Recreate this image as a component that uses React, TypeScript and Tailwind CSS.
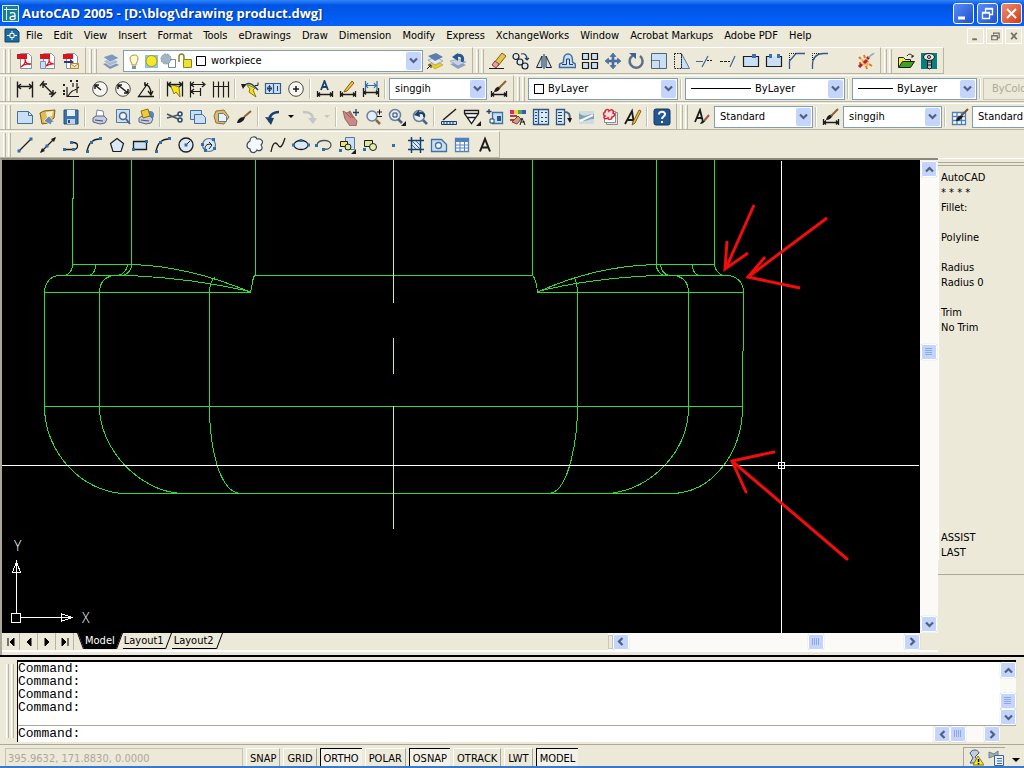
import { ReactNode } from "react";
import clsx from "clsx";

const ink = "#1c1c1c";
const navy = "#1d3f6b";
const sky = "#c9dff5";

const icons: Record<string, ReactNode> = {
  // Acrobat
  pdf: (
    <>
      <path d="M4.500 1.500h8l3 3v12h-11z" fill="#fff" stroke="#8a8fa8" />
      <path d="M1 2h10v5H1z" fill="#d8141c" />
      <path d="M5 15c3-2 5-5 4-8 0 4 3 6 6 5-4-.5-8 1-10 3z" fill="none" stroke="#d8141c" strokeWidth="1.300" />
    </>
  ),
  pdfMail: (
    <>
      <path d="M4.500 1.500h8l3 3v12h-11z" fill="#fff" stroke="#8a8fa8" />
      <path d="M1 2h10v5H1z" fill="#d8141c" />
      <path d="M7 14c2-2 4-4 3-7 0 4 2 5 5 5-3-.5-6 1-8 2z" fill="none" stroke="#d8141c" strokeWidth="1.200" />
      <path d="M1.500 9.500h5v7h-5z" fill={sky} stroke="#7d93b8" />
    </>
  ),
  pdfReview: (
    <>
      <path d="M4.500 1.500h8l3 3v12h-11z" fill="#fff" stroke="#8a8fa8" />
      <path d="M1 2h10v5H1z" fill="#d8141c" />
      <path d="M2 9h6V7l4 3-4 3v-2H2z" fill="#26398c" />
      <path d="M8.500 11.500h8v5h-8zl4 3 4-3" fill="#f4dfa0" stroke="#b08b3c" />
    </>
  ),
  // Layers
  layers: (
    <>
      <path d="M1 12l9-3 7 4-9 4z" fill="#7d93b8" />
      <path d="M1 9l9-3 7 4-9 4z" fill="#a9bad6" stroke="#fff" strokeWidth=".5" />
      <path d="M1 5l9-3 7 4-9 4z" fill="#7f97bd" stroke="#fff" strokeWidth=".5" />
    </>
  ),
  layersCurrent: (
    <>
      <path d="M3 12l8-3 6 4-8 4z" fill="#e8cf1f" stroke="#9c8a16" strokeWidth=".5" />
      <path d="M2 8l8-3 7 4-8 4z" fill="#dfe8f4" stroke="#6d84a8" strokeWidth=".6" />
      <path d="M2 4l8-3 7 4-8 4z" fill="#5b7eae" />
      <path d="M1 17l4-4M5 16v-3H2" fill="none" stroke={ink} />
    </>
  ),
  layersPrev: (
    <>
      <path d="M1 12l9-2 7 3-8 4z" fill="#8b9fbf" />
      <path d="M1 9l9-2 7 3-8 4z" fill="#c6d3e6" stroke="#7086a8" strokeWidth=".5" />
      <path d="M13 10c2-5-1-8-6-6" fill="none" stroke="#2b5890" strokeWidth="3" />
      <path d="M9 1L3 5l6 4z" fill="#2b5890" />
    </>
  ),
  // Modify
  erase: (
    <>
      <path d="M5 11l8-10 4 3-8 10z" fill="#e4c64a" stroke="#77601a" />
      <path d="M3 13l3-4 4 3-3 4z" fill="#e6a0a0" stroke="#8a4444" />
      <path d="M0 16.500h15" stroke={ink} />
    </>
  ),
  copy: (
    <g fill="#dce8f5" stroke={ink} strokeWidth="1.200">
      <circle cx="4" cy="4.500" r="3" /><circle cx="8" cy="10" r="3" /><circle cx="13" cy="14" r="3" />
      <path d="M9 2c4-1 6 1 6 6m-2-2l2 2 2-2" fill="none" stroke={navy} />
    </g>
  ),
  mirror: (
    <>
      <path d="M1.500 15.500L7 4v11.500zM16.500 15.500L11 4v11.500z" fill={sky} stroke={ink} />
      <path d="M9 2v15" stroke="#3970b0" strokeWidth="1.500" />
    </>
  ),
  offset: (
    <>
      <path d="M1.500 15.500v-3c0-1.500 4-1 4-3V8c0-8 9-8 9 0v1.500c0 2 3 1.500 3 3v3z" fill={sky} stroke="#416c9c" strokeWidth="1.500" />
      <path d="M4 12.500h4.500V7h3v5.500H15" fill="none" stroke={navy} />
    </>
  ),
  array: <path d="M1.500 1.500h6v6h-6zM10.500 1.500h6v6h-6zM1.500 10.500h6v6h-6zM10.500 10.500h6v6h-6z" fill={sky} stroke={ink} strokeWidth="1.200" />,
  move: <path d="M9 1l3 3.500h-2V8h3.500V6L17 9l-3.500 3v-2H10v3.500h2L9 17l-3-3.500h2V10H4.500v2L1 9l3.500-3v2H8V4.500H6z" fill="#4a76ad" stroke="#2f4f7c" strokeWidth=".5" />,
  rotate: (
    <>
      <path d="M6 3.500A6.500 6.500 0 1 0 13 4" fill="none" stroke="#5c6f8c" strokeWidth="2.500" />
      <path d="M2 1h7v6z" fill="#3c6296" />
    </>
  ),
  scale: (
    <>
      <path d="M1.500 1.500h15v15h-15z" fill={sky} stroke="#52647c" />
      <path d="M1.500 8.500h8v8" fill="none" stroke={ink} strokeDasharray="1 1" />
    </>
  ),
  stretch: (
    <>
      <path d="M8.500 1.500v15h8z" fill={sky} stroke="#5b7595" />
      <path d="M1.500 1.500h7v15h-7z" fill="none" stroke={ink} strokeDasharray="1.500 1" />
    </>
  ),
  trim: (
    <>
      <path d="M0 9.500h7M6 15l6-11" stroke="#3f6698" strokeWidth="1.200" />
      <path d="M11 8.500h6" stroke={ink} strokeDasharray="2 1" />
    </>
  ),
  extend: (
    <>
      <path d="M1 9.500h10" stroke={ink} strokeDasharray="3 1" />
      <path d="M11 15l5-11" stroke="#3f6698" strokeWidth="1.200" />
    </>
  ),
  breakPoint: (
    <>
      <path d="M1.500 4.500h15v10h-15z" fill={sky} stroke={ink} strokeWidth="1.200" />
      <path d="M10 2h4v4h-4z" fill="#3f6fae" />
    </>
  ),
  breakAt: (
    <>
      <path d="M5 4.500H1.500v10h15v-10H14" fill={sky} stroke={ink} strokeWidth="1.200" />
      <path d="M4 2h3v4H4zM12 2h3v4h-3z" fill="#3f6fae" />
    </>
  ),
  chamfer: (
    <>
      <path d="M1.500 17V9L8 1.500h9" fill="none" stroke="#35598b" strokeWidth="1.300" />
      <path d="M1.500 8V1.500H8" fill="none" stroke={ink} strokeDasharray="1 1" />
    </>
  ),
  fillet: (
    <>
      <path d="M1.500 17v-4q0-11 11-11.500H17" fill="none" stroke="#35598b" strokeWidth="1.300" />
      <path d="M1.500 8V1.500H8" fill="none" stroke={ink} strokeDasharray="1 1" />
    </>
  ),
  explode: (
    <>
      <path d="M2 5l2 2M7 3l1 3M2 11h2M12 12l3 2M9 14l1 3" stroke="#e87818" strokeWidth="2" />
      <path d="M4 7l4 1 4 1-1 5-5-1z" fill="#f2b060" />
      <path d="M2 15l3-3M7 11l3-3M10 7l2-2" stroke="#b5202e" strokeWidth="3" />
      <path d="M12 6c1-4 4-3 5-5" fill="none" stroke="#9da4b8" strokeWidth="1.500" />
    </>
  ),
  openModel: (
    <>
      <path d="M1.500 15V5.500h5l2 2h5v3" fill="#f3ee38" stroke={ink} />
      <path d="M1.500 15.500l4-6h12l-4 6z" fill="#3ea025" stroke={ink} />
      <path d="M10 4c2-3 5-2 6 1m-2 0h2V3" fill="none" stroke={ink} />
    </>
  ),
  bolt: (
    <>
      <path d="M1 1h16v16H1z" fill="#087e82" />
      <path d="M7.500 7h4v9l-2 1-2-1z" fill="#bcbcbc" stroke={ink} />
      <ellipse cx="9" cy="5" rx="5.500" ry="3.500" fill="#e6e6e6" stroke={ink} />
      <circle cx="9" cy="5" r="1.500" fill="none" stroke={ink} />
      <path d="M8 10h3M8 13h3" stroke={ink} />
    </>
  ),
  // Dimension
  dimLinear: <path d="M1.500 1.500v16M16.500 1.500v16M2 6.500h14M5 4L2 6.500 5 9M13 4l3 2.500L13 9" fill="none" stroke={ink} strokeWidth="1.400" />,
  dimAligned: <path d="M1 6l4-5M12 17l5-5M4 4l10 10M4 8V4h4M14 10v4h-4" fill="none" stroke={ink} strokeWidth="1.400" />,
  dimOrdinate: (
    <>
      <path d="M5 7v9.500h12M6 16c2-3 4-6 7-6l4-3M11 3v4M15 3v10" fill="none" stroke={ink} strokeWidth="1.200" />
      <path d="M1 5h2M1 11h2M1 14h2M8 1h2M14 1h2" stroke={ink} strokeWidth="2" />
    </>
  ),
  dimRadius: (
    <>
      <circle cx="9" cy="9" r="7.300" fill="#f6f5ef" stroke="#4b4b4b" />
      <path d="M4 5l6 5M4 9V5h4" fill="none" stroke={ink} strokeWidth="1.500" />
    </>
  ),
  dimDiameter: (
    <>
      <circle cx="9" cy="9" r="7.300" fill="#f6f5ef" stroke="#4b4b4b" />
      <path d="M4 5l10 8M4 9V5h4M14 9v4h-4" fill="none" stroke={ink} strokeWidth="1.500" />
    </>
  ),
  dimAngular: <path d="M17 16.500H1.500L11 3M7 4c4 0 7 4 7 10M8 2v4M11 11l3 4 2-4" fill="none" stroke={ink} strokeWidth="1.300" />,
  dimQuick: (
    <>
      <path d="M4 4l9 3 1 10-4-5-2 2z" fill="#f2e220" stroke="#867b12" />
      <path d="M1.500 1.500v15M16.500 1.500v15M2 4.500h14M5 2L2 4.500 5 7M13 2l3 2.500L13 7" fill="none" stroke={ink} strokeWidth="1.300" />
    </>
  ),
  dimBaseline: <path d="M1.500 1.500v16M2 4.500h14M2 11.500h9M11.500 8v8M5 2L2 4.500 5 7M13 2l3 2.500L13 7M5 9l-3 2.500L5 14" fill="none" stroke={ink} strokeWidth="1.200" />,
  dimContinue: <path d="M1.500 1.500v16M6.500 1.500v16M11.500 1.500v16M16.500 1.500v16M2 6.500h14" fill="none" stroke={ink} strokeWidth="1.200" />,
  leader: (
    <>
      <path d="M2 7c4-5 8-4 11-1l4 4" fill="none" stroke={navy} strokeWidth="1.500" />
      <path d="M5 4l9 4-2 2 3 7-7-5 1-3z" fill="#f2e220" stroke="#867b12" />
      <path d="M0 4l5 0-3 5z" fill={ink} />
      <path d="M14 5.500h3v-3" fill="none" stroke={ink} />
    </>
  ),
  tolerance: (
    <>
      <path d="M1.500 3.500h15v10h-15zM9.500 3.500v10" fill={sky} stroke="#35598b" strokeWidth="1.200" />
      <circle cx="5.500" cy="8.500" r="2" fill="none" stroke={navy} />
      <path d="M5.500 5v7M3 8.500h5M13.500 6v5" stroke={navy} />
    </>
  ),
  centerMark: (
    <>
      <circle cx="9" cy="9" r="7.300" fill="#f6f5ef" stroke="#4b4b4b" />
      <path d="M9 6v6M6 9h6" stroke={ink} strokeWidth="1.500" />
    </>
  ),
  dimEdit: (
    <>
      <path d="M1.500 11v6M16.500 11v6M2 14.500h14M4 12.500l-2 2 2 2M14 12.500l2 2-2 2" fill="none" stroke={ink} strokeWidth="1.300" />
      <path d="M5 10l3.500-9L12 10M6 7h5" fill="none" stroke={navy} strokeWidth="1.800" />
    </>
  ),
  dimTextEdit: (
    <>
      <path d="M1.500 11v6M16.500 11v6M2 14.500h14M4 12.500l-2 2 2 2M14 12.500l2 2-2 2" fill="none" stroke={ink} strokeWidth="1.300" />
      <path d="M6 10l7-9 2 2-7 8-3 1z" fill="#f0c23b" stroke="#8b5a14" />
    </>
  ),
  dimUpdate: (
    <>
      <path d="M1.500 8v9M16.500 8v9M2 12.500h14M4 10.500l-2 2 2 2M14 10.500l2 2-2 2" fill="none" stroke={ink} strokeWidth="1.300" />
      <path d="M4 5.500h10M6 3L4 5.500 6 8M12 3l2 2.500L12 8M3.500 1v9M15 1v9" fill="none" stroke="#2e6cab" strokeWidth="1.200" />
    </>
  ),
  dimStyle: (
    <>
      <path d="M1.500 11v6M16.500 11v6M2 14.500h14M4 12.500l-2 2 2 2M14 12.500l2 2-2 2" fill="none" stroke={ink} strokeWidth="1.300" />
      <path d="M4 12c1-5 4-6 7-5-1 3-4 5-7 5z" fill={ink} />
      <path d="M9 8l7-7" stroke="#8c6233" strokeWidth="2" />
    </>
  ),
  // Standard
  newFile: <path d="M1.500 3.500h11l4 4v8h-15zM12.500 3.500v4h4" fill={sky} stroke="#41719e" />,
  open: (
    <>
      <path d="M1 5l4-2 11-1-1 8-6 5-6 1z" fill="#e0bb5c" stroke="#7c5c1c" />
      <path d="M7 4l7-1-1 5-5 1z" fill="#f5eecb" />
      <path d="M5 13l5-5 6 7-3-1-1 3z" fill="#6d88ac" stroke="#fff" strokeWidth=".6" />
    </>
  ),
  save: (
    <>
      <path d="M2 2h14v14H2z" fill="#3d73ad" stroke="#24507e" />
      <path d="M5 2h8v6H5z" fill="#e7eff7" />
      <path d="M5 11h8v5H5z" fill="#c1d3e5" />
      <path d="M6 12h2v3H6z" fill="#24507e" />
    </>
  ),
  print: (
    <>
      <path d="M5 9l1-7 6 1 1 6z" fill="#fff" stroke="#7c86a2" />
      <path d="M2 10l3-2h8l3 3-2 4-5 1-7-2z" fill="#c5cbe0" stroke="#5b6480" />
      <path d="M4 12l8 1" stroke="#474f69" />
    </>
  ),
  preview: (
    <>
      <path d="M2.500 1.500h13v13h-13z" fill={sky} stroke="#54799f" />
      <circle cx="9" cy="8" r="3.500" fill="#eef6ff" stroke="#4b6583" strokeWidth="1.500" />
      <path d="M12 11l4 5" stroke="#4b6583" strokeWidth="2" />
    </>
  ),
  publish: (
    <>
      <circle cx="13" cy="7" r="4" fill="#4d86c4" />
      <path d="M2 10l3-2h8l3 3-2 4-5 1-7-2z" fill="#c5cbe0" stroke="#5b6480" />
      <path d="M4 3l7-2 2 7-7 2z" fill="#efca35" stroke="#8b6e12" />
      <path d="M4 12l8 1" stroke="#474f69" />
    </>
  ),
  cut: (
    <>
      <path d="M1 6l11 5M1 10l11-3" stroke="#4e5662" strokeWidth="1.500" />
      <circle cx="14" cy="6" r="2" fill="none" stroke="#26466e" strokeWidth="1.500" />
      <circle cx="14" cy="12" r="2" fill="none" stroke="#26466e" strokeWidth="1.500" />
    </>
  ),
  copyClip: (
    <g fill={sky} stroke="#41719e">
      <path d="M1.500 2.500h11v9h-11z" />
      <path d="M5.500 6.500h8l3 3v6h-11z" />
    </g>
  ),
  paste: (
    <>
      <path d="M4 3l8-1 5 7-5 7-8-1-2-7z" fill="#ddbb69" stroke="#8c713a" />
      <path d="M6.500 5.500h5l3 3v5h-8z" fill="#e9f1fa" stroke="#5a7ba1" />
    </>
  ),
  matchProps: (
    <>
      <path d="M9 9l7-6" stroke="#8c6233" strokeWidth="2" />
      <path d="M2 15c1-5 4-6 8-6-1 4-4 6-8 6z" fill={ink} />
    </>
  ),
  undo: (
    <>
      <path d="M6 14C4 9 8 4 15 4" fill="none" stroke={navy} strokeWidth="2.500" />
      <path d="M1 9l9 1-3 7z" fill={navy} />
    </>
  ),
  redo: (
    <>
      <path d="M3 4c8 0 10 3 10 8" fill="none" stroke="#c3c5c6" strokeWidth="2.500" />
      <path d="M17 10H8l5 6z" fill="#c3c5c6" />
    </>
  ),
  pan: (
    <>
      <path d="M1 3l4 2 3-2 3 5 4 5-1 5H8L3 11z" fill="#c98a86" stroke="#7c4744" strokeWidth=".7" />
      <path d="M4 5l5 5M7 4l4 6" stroke="#8d5a57" />
      <path d="M14 1v7M11 4.500h6" stroke={navy} strokeWidth="1.300" />
    </>
  ),
  zoomRealtime: (
    <>
      <circle cx="7" cy="8" r="5" fill="#e4eef9" stroke="#6b7f97" strokeWidth="1.500" />
      <path d="M11 12l4 4" stroke="#8d6a38" strokeWidth="2.500" />
      <path d="M12 4h5M14.500 1.500v5M12 8.500h5" stroke={ink} />
    </>
  ),
  zoomWindow: (
    <>
      <circle cx="7" cy="7" r="5.500" fill="#e4eef9" stroke="#6b7f97" strokeWidth="1.500" />
      <path d="M5 5h4v4H5z" fill="none" stroke={navy} />
      <path d="M10 11l4 4" stroke="#4b6583" strokeWidth="2.500" />
      <path d="M18 13v5h-5z" fill={ink} />
    </>
  ),
  zoomPrev: (
    <>
      <circle cx="8" cy="8" r="5.500" fill="#e4eef9" stroke="#6b7f97" strokeWidth="1.500" />
      <path d="M12 12l4 4" stroke="#4b6583" strokeWidth="2.500" />
      <path d="M13 9c1-4-3-5-6-3" fill="none" stroke={navy} strokeWidth="2" />
      <path d="M8 2L3 7l6 2z" fill={navy} />
    </>
  ),
  distance: (
    <>
      <path d="M3 12L16 1" stroke={ink} strokeWidth="1.500" />
      <path d="M1.500 13.500h15v3h-15z" fill={sky} stroke={navy} />
      <path d="M4 14v2M7 14v2M10 14v2M13 14v2" stroke={navy} />
    </>
  ),
  redraw: (
    <>
      <path d="M1.500 2.500h14v3l-7 10-7-10z" fill="#fff" stroke={ink} strokeWidth="1.300" />
      <path d="M2 5.500h13M4 9.500h9" stroke={ink} strokeWidth="1.300" />
      <path d="M18 13v5h-5z" fill={ink} />
    </>
  ),
  insertBlock: (
    <>
      <path d="M6.500 4.500h10v11h-10z" fill={sky} stroke="#41719e" strokeWidth="1.300" />
      <path d="M11 8h4v5h-4z" fill="#23588e" />
      <path d="M3 1v5M.5 3.500h5" stroke={navy} strokeWidth="1.300" />
      <path d="M4 11h4v4H4z" fill="#fff" stroke={navy} />
    </>
  ),
  properties: (
    <>
      <path d="M1 2h4v4H1z" fill="#d9267e" />
      <path d="M5 2h4v4H5z" fill="#f0da2c" />
      <path d="M9 2h4v4H9z" fill="#45ad42" />
      <path d="M13 2h4v4h-4z" fill="#3c56c2" />
      <path d="M1 8h7M1 12h5" stroke="#c7372f" strokeWidth="2" />
      <path d="M3 14l6-6 3 3-4 5z" fill="#d29c86" stroke="#74473b" />
      <path d="M11 17l2-7 3 7M12 14h4" fill="none" stroke={ink} />
    </>
  ),
  designCenter: (
    <>
      <path d="M1.500 1.500h15v15h-15zM6.500 1.500v15" fill="#dce9f7" stroke="#2c5687" strokeWidth="1.300" />
      <path d="M3 4.500h2M3 7.500h2M3 10.500h2M3 13.500h2M9 4.500h2M13 4.500h2M9 9.500h2M13 9.500h2M9 13.500h2M13 13.500h2" stroke={navy} />
    </>
  ),
  toolPalettes: (
    <>
      <path d="M1.500 1.500h8v15h-8z" fill="#dce9f7" stroke="#2c5687" strokeWidth="1.300" />
      <path d="M3 4.500h4M3 7.500h4M3 10.500h4M3 13.500h4" stroke={navy} />
      <path d="M9 4c5 0 6 2 6 7" fill="none" stroke="#4b6583" strokeWidth="2" />
      <path d="M12 10h5l-2 5z" fill={ink} />
    </>
  ),
  sheetSet: (
    <>
      <path d="M1 3h15v13H1z" fill="#cfdae2" />
      <path d="M1 5c6 6 9 0 15 1v5c-7 0-8 4-15 0z" fill="#7da0b4" />
      <path d="M2 13l13-6" stroke="#f8fafc" strokeWidth="2" />
    </>
  ),
  markup: (
    <>
      <path d="M5.500 4.500h11v12h-11z" fill="#e5e5e5" stroke="#8c8c8c" />
      <path d="M3.500 3.500h11v11h-11z" fill="#fff" stroke="#8c8c8c" />
      <path d="M4 4c0-3 4-3 4-1 3-3 5 0 4 2 3 1 1 4-1 4 0 3-4 3-4 1-4 2-5-1-3-2-2-1-2-3 0-4z" fill="#fbdede" stroke="#d8243a" strokeWidth="1.500" />
    </>
  ),
  textEdit: (
    <>
      <path d="M1 16L8 3l2 13M4 12h6" fill="none" stroke={ink} strokeWidth="1.800" />
      <path d="M9 14l6-12 2 1-6 12-3 2z" fill="#efc13c" stroke="#7c5c1c" />
    </>
  ),
  help: (
    <>
      <rect x="1" y="1" width="16" height="16" rx="2" fill="#245691" stroke="#123764" />
      <path d="M6 6.500c0-4 6.500-3.500 6 0-.3 2-3 2-3 4.500" fill="none" stroke="#fff" strokeWidth="2" />
      <path d="M8 13h2v2H8z" fill="#fff" />
    </>
  ),
  textStyle: (
    <>
      <path d="M2 14L7 2l3 12M4 10h5" fill="none" stroke={ink} strokeWidth="1.800" />
      <path d="M11 13l5-6" stroke="#a05a4e" strokeWidth="2" />
      <path d="M7 16c1-3 3-4 5-3-1 2-3 3-5 3z" fill={ink} />
    </>
  ),
  tableStyle: (
    <>
      <path d="M1.500 4.500h13v12h-13zM1.500 8.500h13M1.500 12.500h13M6 4.500v12M10.500 4.500v12" fill="#fff" stroke="#5182bd" strokeWidth="1.300" />
      <path d="M10 8l7-7" stroke="#6f5738" strokeWidth="2" />
      <path d="M5 13c1-5 4-6 7-5-1 3-4 5-7 5z" fill={ink} />
    </>
  ),
  // Draw
  line: (
    <>
      <path d="M3 15L15 3" stroke={ink} strokeWidth="1.200" />
      <path d="M1.500 13.500h3v3h-3zM13.500 1.500h3v3h-3z" fill="#2e6cab" />
    </>
  ),
  xline: (
    <>
      <path d="M2 16L16 2" stroke={ink} strokeWidth="1.300" />
      <path d="M1 17l2-5 3 3zM17 1l-5 2 3 3z" fill={ink} />
      <path d="M6.500 8.500h3v3h-3z" fill="#2e6cab" />
    </>
  ),
  polyline: (
    <>
      <path d="M3 13.500h8c6 0 6-7 0-7H9" fill="none" stroke={ink} strokeWidth="1.300" />
      <path d="M1 12h3v3H1zM10 12h3v3h-3zM8 5h3v3H8z" fill="#2e6cab" />
    </>
  ),
  arc: (
    <>
      <path d="M2 16C3 9 7 3 15 3" fill="none" stroke={ink} strokeWidth="1.300" />
      <path d="M1 14h3v3H1zM5 5h3v3H5zM14 1h3v3h-3z" fill="#2e6cab" />
    </>
  ),
  polygon: <path d="M9 2.500l6.500 5L13 15.500H5L2.500 7.500z" fill="#dbe9f7" stroke={ink} strokeWidth="1.200" />,
  rectangle: (
    <>
      <path d="M2.500 5.500h13v8h-13z" fill={sky} stroke={ink} strokeWidth="1.300" />
      <path d="M1 12h3v3H1zM14 4h3v3h-3z" fill="#2e6cab" />
    </>
  ),
  circle: (
    <>
      <circle cx="9" cy="9" r="7" fill="#dbe9f7" stroke={ink} strokeWidth="1.300" />
      <path d="M9 9l4-4" stroke={ink} />
      <path d="M7.500 7.500h3v3h-3z" fill="#2e6cab" />
    </>
  ),
  revcloud: <path d="M4 5c0-5 6-5 7-2 5-1 7 3 4 6 3 4-1 7-4 5-2 4-7 3-7-1-4-1-4-6 0-8z" fill="#f5f8fb" stroke="#3f4b58" strokeWidth="1.200" />,
  circleArc: (
    <>
      <circle cx="9" cy="9" r="6.500" fill="#dbe9f7" stroke="#58718e" strokeWidth="1.200" />
      <path d="M5 13c0-4 3-6 7-4M9 6l3 3-3 4" fill="none" stroke={ink} />
      <path d="M1 7h3v3H1zM12 2h3v3h-3zM13 11h3v3h-3zM4 13h3v3H4z" fill="#2e6cab" />
    </>
  ),
  spline: <path d="M2 16C4 5 7 6 9 9s4 3 7-7" fill="none" stroke={ink} strokeWidth="1.300" />,
  ellipse: (
    <>
      <ellipse cx="9" cy="9" rx="7" ry="4.500" fill="#dbe9f7" stroke={ink} strokeWidth="1.300" />
      <path d="M0 7.500h3v3H0zM15 7.500h3v3h-3zM7.500 3h3v3h-3z" fill="#2e6cab" />
    </>
  ),
  ellipseArc: (
    <>
      <path d="M2 9c1-6 14-6 14 0 0 3-3 5-8 4" fill="none" stroke="#4b5561" strokeWidth="1.300" />
      <path d="M0 8h3v3H0zM7 12h3v3H7z" fill="#2e6cab" />
    </>
  ),
  insert: (
    <>
      <path d="M7.500 1.500h9v12h-9z" fill={sky} stroke="#54799f" />
      <path d="M2.500 5.500h7v5h-7z" fill="#ece36a" stroke={ink} />
      <circle cx="10" cy="11" r="3" fill="#d8e79a" stroke={ink} />
      <path d="M1 13h3v3H1z" fill="#2e6cab" />
      <path d="M18 13v5h-5z" fill={ink} />
    </>
  ),
  makeBlock: (
    <>
      <path d="M3.500 4.500h8v6h-8z" fill="#d8e79a" stroke={ink} />
      <circle cx="12" cy="11" r="3.500" fill="#e4efaf" stroke={ink} />
      <path d="M2 12h3v3H2z" fill="#2e6cab" />
    </>
  ),
  point: <path d="M8 8h3v3H8z" fill="#2e6cab" />,
  hatch: (
    <>
      <path d="M4 4h10v10H4z" fill="#dbe9f7" />
      <path d="M4.500 1v16M13.500 1v16M1 4.500h16M1 13.500h16" stroke={navy} strokeWidth="1.500" />
      <path d="M5 9l4 4M5 5l8 8M9 5l4 4" stroke="#2e6cab" />
    </>
  ),
  region: (
    <>
      <path d="M1.500 3.500h10l5 5v7h-15z" fill={sky} stroke="#41719e" strokeWidth="1.300" />
      <circle cx="8.500" cy="9.500" r="3" fill="#f6fafe" stroke="#41719e" strokeWidth="1.300" />
    </>
  ),
  table: (
    <>
      <path d="M2.500 2.500h13v13h-13z" fill="#fff" stroke="#5182bd" strokeWidth="1.300" />
      <path d="M2 2h14v4H2z" fill="#5182bd" />
      <path d="M2 9h14M2 12h14M7 3v12M11.500 3v12" stroke="#5182bd" />
    </>
  ),
  mtext: <path d="M4 15.500L9 3l5 12.500M6 11.500h6" fill="none" stroke={ink} strokeWidth="2" />,
};

const menus = [
  "File", "Edit", "View", "Insert", "Format", "Tools", "eDrawings", "Draw", "Dimension", "Modify",
  "Express", "XchangeWorks", "Window", "Acrobat Markups", "Adobe PDF", "Help",
];

function Tools({ names }: { names: string[] }) {
  return names.map((name, i) =>
    name === "|" ? (
      <span key={i} className="h-5 w-1.5 shrink-0 px-0.5">
        <span className="block h-full border-l border-[#c5c2b2] border-r border-r-white" />
      </span>
    ) : name === "_" ? (
      <span key={i} className="w-1.5 shrink-0" />
    ) : name === "v" ? (
      <button key={i} aria-label="More" className="flex h-6 w-[13px] shrink-0 items-center justify-center">
        <span className={clsx("border-x-3 border-t-3 border-x-transparent", names[i - 1] === "redo" ? "border-t-[#c3c5c6]" : "border-t-black")} />
      </button>
    ) : (
      <button key={i} aria-label={name} className="flex h-6 w-[23px] shrink-0 items-center justify-center">
        <svg width="18" height="18" viewBox="0 0 18 18">
          {icons[name]}
        </svg>
      </button>
    )
  );
}

function Toolbar({ children, open }: { children: ReactNode; open?: boolean }) {
  return (
    <div
      className={clsx(
        "flex h-[27px] shrink-0 items-center border-t border-b border-t-white border-b-[#b9b5a4]",
        !open && "border-r border-r-[#b9b5a4] pr-[3px]"
      )}
    >
      <span className="flex w-[13px] gap-0.5 pl-[3px]">
        <span className="h-6 w-[3px] border-r border-l border-l-white border-r-[#b9b5a4]" />
        <span className="h-6 w-[3px] border-r border-l border-l-white border-r-[#b9b5a4]" />
      </span>
      {children}
    </div>
  );
}

type Direction = "up" | "down" | "left" | "right";

const chevrons: Record<Direction, string> = {
  up: "M1 6.500l3.500-3.500L8 6.500",
  down: "M1 2.500l3.500 3.500L8 2.500",
  left: "M6.500 1L3 4.500 6.500 8",
  right: "M2.500 1L6 4.500 2.500 8",
};

function Chevron({ dir }: { dir: Direction }) {
  return (
    <svg width="9" height="9" viewBox="0 0 9 9">
      <path d={chevrons[dir]} fill="none" stroke="#4d6185" strokeWidth="2.200" />
    </svg>
  );
}

function Combo({ label, value, lead, className }: { label: string; value: string; lead?: ReactNode; className: string }) {
  return (
    <div className={clsx("ml-px flex h-[22px] shrink-0 items-center border border-[#7f9db9] bg-white p-px", className)}>
      {lead}
      <select aria-label={label} className="h-full min-w-0 flex-1 appearance-none bg-white pl-1 outline-none">
        <option>{value}</option>
      </select>
      <span className="flex h-full w-[15px] items-center justify-center rounded-xs bg-[#c5d4fb]">
        <Chevron dir="down" />
      </span>
    </div>
  );
}

function ScrollButton({ dir }: { dir: Direction }) {
  return (
    <button
      aria-label={`Scroll ${dir}`}
      className="flex size-4 shrink-0 items-center justify-center rounded-xs border border-white bg-[#c5d4fb] shadow-[0_0_1px_#8ea6d8]"
    >
      <Chevron dir={dir} />
    </button>
  );
}

function Thumb({ vertical }: { vertical?: boolean }) {
  return (
    <span className="flex size-4 shrink-0 items-center justify-center rounded-xs border border-white bg-[#c5d4fb] shadow-[0_0_1px_#8ea6d8]">
      <svg width="8" height="8" viewBox="0 0 8 8">
        <path
          d={vertical ? "M0 .5h7M0 2.500h7M0 4.500h7M0 6.500h7" : "M.5 0v7M2.500 0v7M4.500 0v7M6.500 0v7"}
          stroke="#8ea9e6"
        />
      </svg>
    </span>
  );
}

function TitleBar() {
  return (
    <header className="flex h-[26px] shrink-0 items-center gap-[3px] bg-linear-to-b from-[#2f86fb] via-[#0054e3] via-20% to-[#0262fc] px-0.5">
      <svg width="17" height="17" viewBox="0 0 17 17" className="shrink-0">
        <path d="M.5.5h16v16H.5z" fill="#1a7e96" stroke="#d8f0f4" />
        <path d="M2 4.500h13M4.500 2v13" stroke="#d8f0f4" />
        <path d="M8 8c4-1 5 0 5 2v4c-3 1-5 1-5-1s2-2 5-2" fill="none" stroke="#fff" strokeWidth="1.300" />
      </svg>
      <h1 className="flex-1 truncate font-['Open_Sans','Noto_Sans',sans-serif] text-[13px] font-bold text-white [text-shadow:1px_1px_1px_#0a2a80]">
        AutoCAD 2005 - [D:\blog\drawing product.dwg]
      </h1>
      <button aria-label="Minimize" className="size-[21px] rounded-[3px] border border-white bg-linear-to-br from-[#5a8cf4] to-[#1c4fd0]">
        <svg viewBox="0 0 19 19"><path d="M4 14h7" stroke="#fff" strokeWidth="3" /></svg>
      </button>
      <button aria-label="Restore" className="size-[21px] rounded-[3px] border border-white bg-linear-to-br from-[#5a8cf4] to-[#1c4fd0]">
        <svg viewBox="0 0 19 19">
          <path d="M7.500 8V4.500h7v6H12M7 5h8M4.500 8.500h7v6h-7zM4 9h8" fill="none" stroke="#fff" strokeWidth="1.300" />
        </svg>
      </button>
      <button aria-label="Close" className="size-[21px] rounded-[3px] border border-white bg-linear-to-br from-[#f08a6c] to-[#cf3b12]">
        <svg viewBox="0 0 19 19"><path d="M5 5l9 9M14 5l-9 9" stroke="#fff" strokeWidth="2" /></svg>
      </button>
    </header>
  );
}

function MenuBar() {
  return (
    <nav className="flex h-[21px] shrink-0 items-center gap-px pr-0.5 pb-0.5 pl-1">
      <svg width="16" height="15" viewBox="0 0 16 15" className="shrink-0">
        <path d="M1 1h11l3 3v10H1z" fill="#1d6b9f" stroke="#123f66" />
        <path d="M3 7.500h10M8 3v9" stroke="#fff" />
        <path d="M6 5.500h4v4H6z" fill="#1d6b9f" stroke="#fff" />
      </svg>
      {menus.map((menu) => (
        <button key={menu} className="px-[5px] whitespace-nowrap">
          {menu}
        </button>
      ))}
      <div className="ml-auto flex gap-0.5">
        {["M4 11h5", "M6.500 6V4.500h6v5H11M4.500 7.500h6v4h-6zM4 7h7", "M5 4l6 7M11 4l-6 7"].map((d, i) => (
          <button key={d} aria-label={["Minimize", "Restore", "Close"][i] + " drawing"} className="h-4 w-[17px] border border-white">
            <svg width="15" height="14" viewBox="0 0 15 15">
              <path d={d} fill="none" stroke="#716f64" strokeWidth={i === 1 ? 1.3 : 2} />
            </svg>
          </button>
        ))}
      </div>
    </nav>
  );
}

function Swatch() {
  return <span className="ml-1 size-2.5 shrink-0 border border-black" />;
}

function Toolbars() {
  const layerLead = (
    <svg width="82" height="18" viewBox="0 0 82 18" className="shrink-0">
      <path d="M7 13c0-3-2-3-2-7 1-4 8-4 8 0 0 4-2 4-2 7z" fill="#fffcc2" stroke="#9a9450" />
      <path d="M7 14h4v3H7z" fill="#88909a" />
      <path d="M20 3h13v13H20z" fill="#8ec3dc" />
      <circle cx="26.500" cy="9" r="5.500" fill="#f4e82a" stroke="#a89a1a" />
      <path d="M43.500 7.500h7v8h-7z" fill="#fff" stroke="#7a8896" />
      <circle cx="41" cy="7" r="5" fill="#9fb6c4" stroke="#7a8f9e" strokeDasharray="2 1" />
      <path d="M54 10V5c0-4 5-4 5 0v3" fill="none" stroke="#8c8418" strokeWidth="1.500" />
      <path d="M58.500 7.500h8v8h-8z" fill="#ece12f" stroke="#8c8418" />
      <path d="M71.500 4.500h9v9h-9z" fill="#fff" stroke="#000" />
    </svg>
  );

  return (
    <div className="shrink-0 overflow-hidden">
      <div className="flex h-7">
        <Toolbar>
          <Tools names={["pdf", "pdfMail", "pdfReview"]} />
        </Toolbar>
        <Toolbar>
          <Tools names={["layers"]} />
          <Combo label="Layer" value="workpiece" lead={layerLead} className="w-[300px]" />
          <Tools names={["layersCurrent", "layersPrev"]} />
        </Toolbar>
        <Toolbar>
          <Tools
            names={[
              "erase", "copy", "mirror", "offset", "array", "move", "rotate", "scale", "stretch", "trim", "extend",
              "breakPoint", "breakAt", "chamfer", "fillet",
            ]}
          />
          <span className="w-[23px]" />
          <Tools names={["explode"]} />
        </Toolbar>
        <Toolbar>
          <Tools names={["openModel", "bolt"]} />
        </Toolbar>
      </div>

      <div className="flex h-7">
        <Toolbar>
          <Tools
            names={[
              "dimLinear", "dimAligned", "dimOrdinate", "_", "dimRadius", "dimDiameter", "dimAngular", "|",
              "dimQuick", "dimBaseline", "dimContinue", "|", "leader", "tolerance", "centerMark", "|",
              "dimEdit", "dimTextEdit", "dimUpdate", "|",
            ]}
          />
          <Combo label="Dimension style" value="singgih" className="w-[98px]" />
          <Tools names={["dimStyle"]} />
        </Toolbar>
        <Toolbar open>
          <Combo label="Color" value="ByLayer" lead={<Swatch />} className="w-[150px]" />
          <Tools names={["|"]} />
          <Combo
            label="Linetype"
            value="ByLayer"
            lead={<span className="ml-1 h-px w-[60px] shrink-0 bg-black" />}
            className="w-[160px]"
          />
          <Tools names={["|"]} />
          <Combo
            label="Lineweight"
            value="ByLayer"
            lead={<span className="ml-1 h-px w-[35px] shrink-0 bg-black" />}
            className="w-[125px]"
          />
          <Tools names={["|"]} />
          <select
            aria-label="Plot style"
            disabled
            className="h-[22px] w-[100px] shrink-0 appearance-none border border-[#c9c7ba] pl-2 text-[#aca899] opacity-100"
          >
            <option>ByColor</option>
          </select>
        </Toolbar>
      </div>

      <div className="flex h-7">
        <Toolbar>
          <Tools
            names={[
              "newFile", "open", "save", "|", "print", "preview", "publish", "|", "cut", "copyClip", "paste",
              "matchProps", "|", "undo", "v", "redo", "v", "|", "pan", "zoomRealtime", "zoomWindow", "zoomPrev", "|",
              "distance", "redraw", "insertBlock", "properties", "designCenter", "toolPalettes", "sheetSet",
              "markup", "textEdit", "|", "help",
            ]}
          />
        </Toolbar>
        <Toolbar open>
          <Tools names={["textStyle"]} />
          <Combo label="Text style" value="Standard" className="w-[99px]" />
          <Tools names={["|", "dimStyle"]} />
          <Combo label="Dimension style" value="singgih" className="w-[99px]" />
          <Tools names={["|", "tableStyle"]} />
          <Combo label="Table style" value="Standard" className="w-[99px]" />
        </Toolbar>
      </div>

      <div className="flex h-[27px]">
        <Toolbar>
          <Tools names={["line", "xline", "polyline", "arc", "polygon", "rectangle", "arc", "circle", "circleArc"]} />
          <span className="w-[23px]" />
          <Tools
            names={[
              "revcloud", "spline", "ellipse", "ellipseArc", "insert", "makeBlock", "point", "hatch", "region",
              "table", "mtext",
            ]}
          />
        </Toolbar>
      </div>
    </div>
  );
}

function Drawing() {
  return (
    <svg className="block size-full bg-black">
      <g transform="translate(-2 -160)" fill="none">
        <g stroke="#2fdc2f" shapeRendering="crispEdges">
          {/* left flange */}
          <path d="M73.500 160v38l-1 1v66q0 7-7 10.500" />
          <path d="M131.500 160v105q0 7-8 10.500M127.500 265q-1 8-9 10.500M95.500 265q0 8-6 10.500" />
          <path d="M72 264.500h59c40 1 80 11 119 27.500" />
          <path d="M58 275.500h73c40 2 80 7 119 16" />
          <path d="M255.500 160v115l-2 2-3 15.500H44.500" />
          <path d="M60 275.500c-9 0-15.500 7-15.500 17v114c0 46 38 87 82 87" />
          <path d="M113 275.500c-9 2-13.500 8-13.500 17v114c0 42 39 84 81 87" />
          <path d="M214.500 277c-4 5-5 10-5 15v114c0 40 9 82 28 87" />
          {/* right flange */}
          <path d="M714.500 160v105q1 8 9 10.500M656.500 160v105q0 7 7 10.500M660.500 265q1 8 8 10.500M692.500 265q0 8 6 10.500" />
          <path d="M715 264.500h-59c-42 1-82 11-118 27.500" />
          <path d="M728 275.500h-73c-42 2-82 7-117 16" />
          <path d="M532.500 160v115q4 5 5 17.500h206" />
          <path d="M726 275.500c11 0 17.500 7 17.500 17v58l-1 1v55c0 46-30 87-72 87" />
          <path d="M675 275.500c9 2 13.500 8 13.500 17v114c0 46-37 82-79 87" />
          <path d="M574.500 277c2 5 3 10 3 15v114c0 32-8 82-26 87" />
          {/* body */}
          <path d="M255 275.500h278M44 406.500h699M126 493.500h545" />
        </g>
        <path d="M393.500 160v143M393.500 338v36M393.500 406v123" stroke="#dcec78" shapeRendering="crispEdges" />
        {/* crosshair */}
        <path d="M2 465.500h917M781.500 161v900M778.500 462.500h6v6h-6z" stroke="#fff" shapeRendering="crispEdges" />
        {/* ucs */}
        <g stroke="#fff" shapeRendering="crispEdges">
          <path d="M11.500 613.500h9v9h-9zM16.500 613v-51M21 617.500h50" />
          <path d="M16.500 561.500l-4 11h8zM72 617.500l-11-4v8z" />
        </g>
        <g fill="#fff" fontSize="14" fontWeight="300" fontFamily="'Open Sans', 'Liberation Sans', sans-serif">
          <text x="14" y="551">Y</text>
          <text x="82" y="623">X</text>
        </g>
        <g stroke="#f00d0d" strokeWidth="3">
          <path d="M754 205l-28 63M727 241l-2 28 23-16" />
          <path d="M827 218l-79 59M765 257l-17 20 52 11" />
          <path d="M847 559l-115-98M774 452l-42 9 14 31" strokeLinecap="round" />
        </g>
      </g>
    </svg>
  );
}

function Slant({ back, fill }: { back?: boolean; fill?: string }) {
  return (
    <svg width="7" height="16" viewBox="0 0 7 16" className="shrink-0">
      {fill && <path d={back ? "M1 0h6v16z" : "M0 0h6L0 16z"} fill={fill} />}
      <path d={back ? "M.5 0l6 16" : "M6.500 0l-6 16"} stroke="#000" />
    </svg>
  );
}

function LayoutTabs() {
  return (
    <div className="flex h-[17px] shrink-0">
      {["M3 1v8M9 1L5 5l4 4z", "M8 1L4 5l4 4z", "M4 1l4 4-4 4z", "M3 1l4 4-4 4zM9 1v8"].map((d) => (
        <button key={d} aria-label="Scroll tabs" className="flex w-[18px] shrink-0 items-center justify-center border-r border-[#b9b5a4]">
          <svg width="12" height="10" viewBox="0 0 12 10">
            <path d={d} fill="#000" stroke="#000" />
          </svg>
        </button>
      ))}
      <span className="w-[3px] shrink-0" />
      <Slant back fill="#000" />
      <button className="h-4 border-b border-black bg-black px-px text-white">Model</button>
      <Slant fill="#000" />
      <button className="h-4 border-b border-black px-px">Layout1</button>
      <Slant />
      <button className="h-4 border-b border-black px-0.5">Layout2</button>
      <Slant />
      <div className="ml-auto flex w-[34%] items-center bg-[#fbfaf6]">
        <span className="h-3.5 w-[5px] border border-[#c9c7ba] bg-[#ece9d8]" />
        <ScrollButton dir="left" />
        <span className="flex-[9]" />
        <Thumb />
        <span className="flex-[4]" />
        <ScrollButton dir="right" />
      </div>
    </div>
  );
}

function SideMenu() {
  const groups = [["AutoCAD", "* * * *", "Fillet:"], ["Polyline"], ["Radius", "Radius 0"], ["Trim", "No Trim"]];
  return (
    <aside className="flex h-[417px] w-[86px] shrink-0 flex-col border-b border-[#aca899] pb-3.5">
      <div className="h-[5px] border-y border-t-white border-b-[#aca899]" />
      <div className="mb-1 h-[3px] border-b border-[#aca899]" />
      <div className="flex flex-1 flex-col gap-[15px] border-l border-white pl-0.5 leading-[15px]">
        {groups.map((group) => (
          <div key={group[0]} className="flex flex-col items-start">
            {group.map((item) => (
              <button key={item}>{item}</button>
            ))}
          </div>
        ))}
        <div className="mt-auto flex flex-col items-start">
          <button>ASSIST</button>
          <button>LAST</button>
        </div>
      </div>
    </aside>
  );
}

function CommandWindow() {
  return (
    <section className="flex h-[89px] shrink-0 border-t-2 border-black bg-[#ece9d8] pt-[3px] pr-2 pb-0.5">
      <span className="flex w-[17px] gap-0.5 py-1 pl-1.5">
        <span className="w-[3px] border-r border-l border-l-white border-r-[#b9b5a4]" />
        <span className="w-[3px] border-r border-l border-l-white border-r-[#b9b5a4]" />
      </span>
      <div className="flex min-w-0 flex-1 flex-col border-t-2 border-l border-black bg-white font-['Liberation_Mono',monospace] text-[13px]">
        <div className="flex h-[65px] border-b border-[#aca899]">
          <div className="flex-1 leading-[13px]">
            {[0, 1, 2, 3].map((n) => (
              <p key={n}>Command:</p>
            ))}
          </div>
          <div className="flex flex-col bg-[#fbfaf6]">
            <ScrollButton dir="up" />
            <span className="flex-1" />
            <Thumb vertical />
            <ScrollButton dir="down" />
          </div>
        </div>
        <div className="flex flex-1 items-center">
          <label htmlFor="command">Command:</label>
          <input id="command" className="h-4 min-w-0 flex-1 outline-none" />
          <div className="flex w-[68px] bg-[#fbfaf6] pl-0.5">
            <ScrollButton dir="left" />
            <Thumb />
            <span className="flex-1" />
            <ScrollButton dir="right" />
          </div>
          <span className="h-full w-4 bg-[#ece9d8]" />
        </div>
      </div>
    </section>
  );
}

const modes = [
  { name: "SNAP", on: false },
  { name: "GRID", on: false },
  { name: "ORTHO", on: true },
  { name: "POLAR", on: false },
  { name: "OSNAP", on: true },
  { name: "OTRACK", on: false },
  { name: "LWT", on: false },
  { name: "MODEL", on: true },
];

function StatusBar() {
  return (
    <footer className="flex h-6 shrink-0 items-end gap-[3px] overflow-hidden border-t border-b-2 border-t-[#aca899] border-b-[#3a78c8] pl-[5px]">
      <span className="h-[18px] w-[238px] border border-b-0 border-[#c5c2b2] pt-0.5 pl-0.5 leading-[15px] text-[#aca899]">
        395.9632, 171.8830, 0.0000
      </span>
      {modes.map((mode) => (
        <button
          key={mode.name}
          aria-pressed={mode.on}
          className={clsx(
            "h-[18px] border-t border-l px-[3px] pt-0.5 leading-[15px]",
            mode.on ? "border-black bg-[#f4f2e8]" : "border-white border-r border-r-[#aca899]"
          )}
        >
          {mode.name}
        </button>
      ))}
      <div className="ml-auto flex h-[19px] items-center gap-1 border-t border-l border-[#aca899] pl-1">
        <svg width="16" height="17" viewBox="0 0 16 17">
          <path d="M2 4c2-4 8-4 9 0l-4 4 5 6H2l3-5z" fill="#c4cce0" stroke="#44557c" />
          <path d="M10 7l6 9H5z" fill="#f8e71c" stroke="#8c7f10" />
          <path d="M10.500 10v3M10.500 14v1.500" stroke="#000" strokeWidth="1.500" />
        </svg>
        <svg width="17" height="17" viewBox="0 0 17 17">
          <path d="M1 3l5 2 4-3v6l-4-1-5 2z" fill="#9fb0b8" stroke="#6d828c" />
          <path d="M6.500 6.500h9v10h-9zM9 9.500h5M9 12h5M9 14.500h5" fill="#e8f0fa" stroke="#3d6796" />
        </svg>
      </div>
      <button aria-label="Tray settings" className="flex h-3 w-4 items-center justify-center">
        <span className="border-x-4 border-t-4 border-x-transparent border-t-black" />
      </button>
    </footer>
  );
}

export default function App() {
  return (
    <div className="flex h-screen flex-col overflow-hidden bg-[#ece9d8] font-['DejaVu_Sans_Condensed','Liberation_Sans',sans-serif] text-[11px] leading-4 text-black">
      <TitleBar />
      <MenuBar />
      <Toolbars />
      <main className="flex min-h-0 flex-1">
        <div className="flex min-w-0 flex-1 flex-col border-t-2 border-l-2 border-[#8c897a] border-l-[#aca899]">
          <div className="flex min-h-0 flex-1">
            <div className="min-w-0 flex-1">
              <Drawing />
            </div>
            <div className="flex w-[18px] flex-col items-center bg-[#fbfaf6] py-px">
              <ScrollButton dir="up" />
              <span className="flex-[13]" />
              <Thumb vertical />
              <span className="flex-[20]" />
              <ScrollButton dir="down" />
            </div>
          </div>
          <div className="pr-[18px]">
            <LayoutTabs />
          </div>
          <div className="mb-[3px] h-0.5 bg-white" />
        </div>
        <SideMenu />
      </main>
      <CommandWindow />
      <StatusBar />
    </div>
  );
}
